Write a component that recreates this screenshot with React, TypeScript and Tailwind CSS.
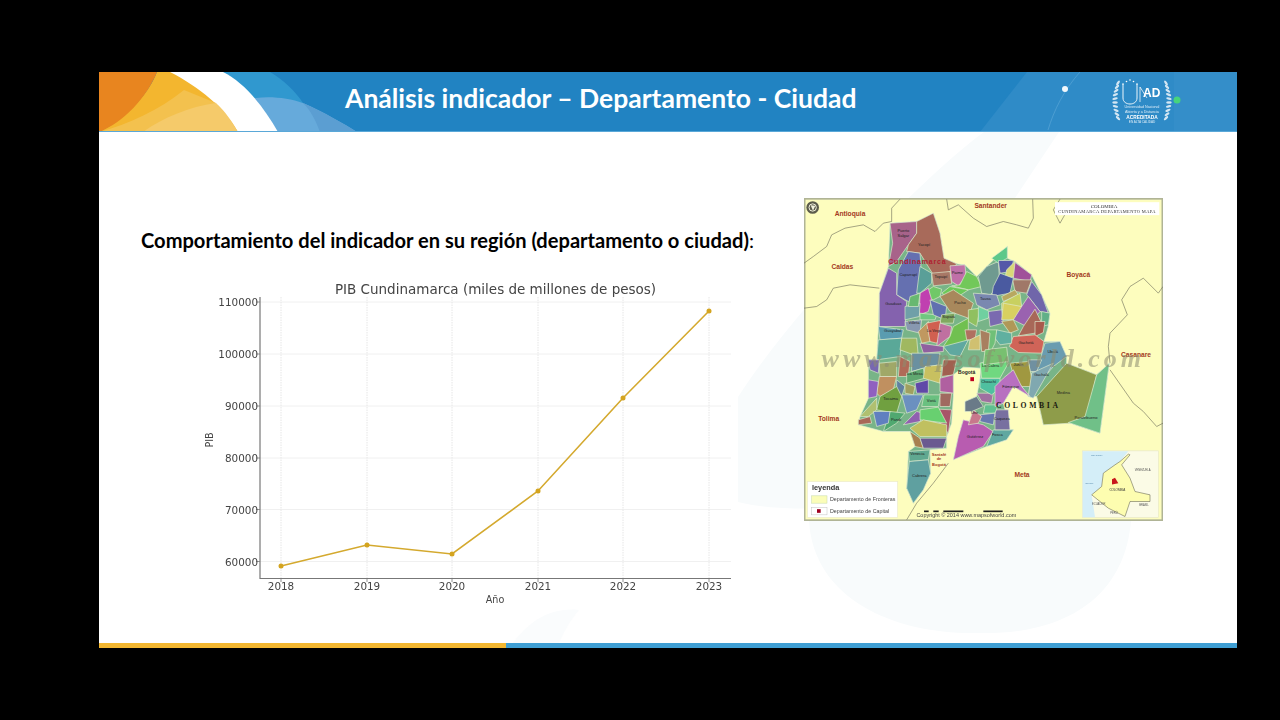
import React from "react";

const SILHOUETTE =
  "510,280 590,275 640,250 660,310 672,385 710,402 735,405 770,440 800,410 862,350 862,385 885,395 935,435 965,495 990,550 985,590 972,635 1020,635 1040,680 1040,700 1130,735 1168,700 1140,910 1045,878 970,885 950,800 925,800 905,770 880,770 850,820 870,900 880,900 860,930 800,950 700,990 715,920 730,870 745,885 760,840 735,845 735,815 770,800 780,745 782,715 730,712 700,735 700,800 695,880 680,920 680,955 630,960 632,1030 610,1080 580,1120 560,1075 565,965 585,950 570,905 490,905 415,885 420,860 445,805 445,690 470,690 475,590 478,490 505,410";

const REGIONS: [string, string][] = [
  ["#a8638a", "510,280 590,275 590,310 565,345 530,395 505,410 518,340"],
  ["#a86a5a", "590,275 640,250 660,310 672,385 710,402 695,425 640,435 600,370 560,365 565,345 590,310"],
  ["#6570b0", "565,365 600,370 605,440 595,490 565,515 530,495 535,420"],
  ["#8462ae", "505,415 530,430 530,495 560,515 555,590 478,590 478,490"],
  ["#5a9f98", "600,410 635,430 635,460 600,490 590,490"],
  ["#a87866", "635,430 690,425 695,462 640,468"],
  ["#c070a8", "690,408 735,405 738,440 715,468 695,455"],
  ["#72c85a", "740,425 770,440 785,470 745,480 695,468 720,465"],
  ["#6cc858", "690,470 745,480 700,510 665,490"],
  ["#70c868", "610,490 640,470 665,478 660,500 640,510 625,505"],
  ["#6f9a90", "800,410 835,395 840,470 810,495 785,490 775,440"],
  ["#5cc88a", "815,385 862,350 862,385 835,400"],
  ["#5558a8", "835,392 880,392 875,425 840,430"],
  ["#d8d878", "860,420 885,395 885,440 855,445"],
  ["#a0509a", "885,398 935,435 930,455 880,445"],
  ["#a07868", "878,450 935,450 920,490 885,485"],
  ["#4a5aa0", "840,430 880,445 870,490 815,500 820,470"],
  ["#7066aa", "935,455 965,495 985,550 960,545 925,500 920,495"],
  ["#b8a860", "845,500 885,480 895,495 850,515"],
  ["#c8d060", "845,520 900,490 905,530 845,540"],
  ["#9a62b0", "880,530 905,530 925,500 960,545 920,590 880,570"],
  ["#60b088", "965,545 990,550 985,585 965,590"],
  ["#a86858", "945,538 965,580 945,610 895,618 910,590"],
  ["#a85a4c", "945,575 975,575 970,608 945,620"],
  ["#d06458", "880,620 945,615 972,635 965,670 895,668 868,650"],
  ["#6a9cb0", "975,640 1020,635 1040,680 1000,710 950,770 925,800 935,730 960,690"],
  ["#7090a0", "925,690 965,690 950,725 930,725"],
  ["#a09840", "870,700 925,695 940,770 905,770 880,735"],
  ["#80a8b0", "935,730 1000,700 940,805 925,800"],
  ["#8e9c4a", "950,800 1040,700 1130,735 1100,860 1050,880 970,885 960,840"],
  ["#70c088", "1168,700 1140,910 1045,878 1095,860 1130,735"],
  ["#a8885c", "660,500 700,480 760,520 745,565 690,545"],
  ["#7a88b0", "760,490 830,495 840,525 800,540 770,525"],
  ["#90c060", "745,540 780,535 770,590 745,575"],
  ["#70d0a0", "775,530 810,545 805,565 775,575"],
  ["#7a6ab0", "805,545 845,540 850,580 810,590"],
  ["#d8d060", "850,520 905,530 880,570 845,570"],
  ["#b09858", "845,575 880,570 895,600 870,610"],
  ["#60b0a0", "830,600 875,610 875,640 840,645 825,625"],
  ["#70c078", "800,600 830,600 825,640 815,660 790,655"],
  ["#c040b0", "600,490 625,475 635,510 625,545 598,555"],
  ["#70a0a8", "555,530 600,520 598,560 555,570"],
  ["#68b870", "570,500 600,490 595,530 565,530"],
  ["#70c880", "600,550 650,555 645,570 600,570"],
  ["#6070b0", "630,510 680,530 675,570 640,555"],
  ["#8898b0", "555,575 605,570 600,610 560,600"],
  ["#80a860", "665,555 705,550 700,580 660,580"],
  ["#c09860", "595,605 625,575 630,635 605,640"],
  ["#d06050", "620,580 660,572 668,610 650,640 630,635"],
  ["#c070a0", "660,580 695,590 690,620 650,650"],
  ["#70c050", "700,590 745,565 745,630 690,670 670,650 690,620"],
  ["#5a9cb0", "475,590 550,600 545,625 480,630"],
  ["#5aa898", "475,630 545,625 540,680 470,690"],
  ["#a0b860", "545,625 590,625 595,680 540,660"],
  ["#9060a0", "600,640 670,650 670,665 610,670"],
  ["#60a8a0", "670,650 745,630 720,680 690,675"],
  ["#b07060", "735,600 770,600 765,630 740,630"],
  ["#d0c070", "750,630 780,615 780,660 745,660"],
  ["#a88060", "780,600 810,610 805,665 785,665"],
  ["#7868b0", "445,690 478,690 475,730 450,720"],
  ["#a0a868", "478,700 530,695 530,740 480,740"],
  ["#b06a58", "540,680 570,695 565,740 535,740"],
  ["#6a90a0", "575,670 660,670 655,705 610,715 575,725"],
  ["#60a870", "560,730 610,715 615,745 560,760"],
  ["#c8c060", "615,710 665,705 660,760 610,745"],
  ["#a06050", "670,690 710,690 700,735 665,740"],
  ["#b060a0", "660,745 700,735 700,790 660,785"],
  ["#a06a60", "660,790 695,790 690,830 660,830"],
  ["#a85468", "655,838 695,840 685,910 660,880"],
  ["#6080a0", "530,750 555,770 545,800 530,795"],
  ["#a0a060", "555,760 585,770 580,795 555,790"],
  ["#6048a8", "585,760 625,750 625,790 590,790"],
  ["#c09060", "478,740 530,740 520,780 480,800 470,790"],
  ["#9060c0", "445,750 475,755 470,800 445,805"],
  ["#70a040", "480,800 530,770 545,800 530,850 470,840"],
  ["#6b90c0", "545,795 610,795 590,840 560,850"],
  ["#6ac080", "612,795 660,795 655,830 605,830"],
  ["#50a870", "510,845 555,850 530,880 490,905"],
  ["#b0c070", "420,860 470,805 470,840 445,860"],
  ["#a86858", "415,870 450,860 455,880 415,885"],
  ["#6080c0", "460,845 510,845 505,880 470,890"],
  ["#9060b0", "550,885 590,845 610,850 600,875"],
  ["#68d070", "600,840 655,832 680,880 600,870"],
  ["#c0c060", "570,895 610,870 680,885 680,920 600,920"],
  ["#a88050", "570,905 600,925 610,955 585,950"],
  ["#6a5a90", "600,925 680,925 670,955 610,955"],
  ["#60a890", "565,965 630,960 625,990 568,995"],
  ["#5fa0a0", "568,995 625,990 632,1030 610,1080 580,1120 560,1075 565,1020"],
  ["#b85cb0", "730,870 790,885 820,905 790,950 700,990 715,920"],
  ["#60a8a0", "820,900 880,900 860,930 800,950"],
  ["#7870a0", "825,840 865,840 870,900 825,900"],
  ["#60c090", "795,825 835,825 825,850 790,850"],
  ["#6878b0", "780,855 825,850 820,885 780,875"],
  ["#c8788c", "745,885 760,840 785,860 775,880"],
  ["#a070a0", "770,790 820,790 815,820 785,815"],
  ["#50c0a0", "780,745 840,745 840,775 815,795 780,775"],
  ["#6a7a88", "735,815 770,800 790,830 755,845 735,845"],
  ["#70d880", "780,700 850,680 865,700 840,745 785,745"],
  ["#78c070", "795,660 860,652 865,695 790,705"],
  ["#b870c0", "880,720 905,770 930,800 880,770 850,820 825,830 825,770 850,745"],
];

const LINES = [
  "252,400 280,380 320,350 335,315 375,295 430,285 465,305 490,280 515,275 515,235 540,208",
  "252,535 290,530 320,510 340,475 390,465 478,475",
  "680,208 685,240 715,225 760,265 800,290 850,275 890,285 925,295 940,265 938,208",
  "1020,208 1000,240 1020,280 1040,245",
  "1329,470 1315,490 1270,445 1230,470 1205,510 1222,555 1170,610 1165,650 1170,700",
  "1170,720 1240,820 1270,845 1310,890 1329,880",
  "685,1000 640,1060 590,1120 560,1170",
];

const SMALL: [string, number, number][] = [
  ["Puerto", 550, 307], ["Salgar", 550, 323], ["Yacopí", 612, 349], ["Caparrapí", 565, 438],
  ["Guaduas", 520, 527], ["Pacho", 720, 523], ["Paime", 712, 433], ["Topaipí", 663, 445],
  ["Medina", 1030, 792], ["Paratebueno", 1098, 867], ["Gutiérrez", 765, 926], ["Gachetá", 918, 642],
  ["Ubalá", 998, 671], ["Gachalá", 964, 739], ["Junín", 895, 710], ["La Calera", 812, 712],
  ["Choachí", 806, 760], ["Fómeque", 872, 774], ["Cabrera", 598, 1043], ["Venecia", 592, 975],
  ["Caqueza", 845, 870], ["Fosca", 832, 920], ["Une", 764, 854], ["Tausa", 796, 512],
  ["Guayabal", 518, 606], ["Villeta", 582, 583], ["La Vega", 642, 608], ["Supatá", 686, 565],
  ["Tocaima", 512, 810], ["La Mesa", 585, 735], ["Viotá", 634, 816], ["Pandi", 528, 873],
];

const CHART_X = [281, 367, 452, 538, 623, 709];
const CHART_Y = [566, 545, 554, 491, 398, 311];
const YEARS = ["2018", "2019", "2020", "2021", "2022", "2023"];
const TICKS: [string, number][] = [
  ["110000", 302], ["100000", 354], ["90000", 406], ["80000", 458], ["70000", 509.5], ["60000", 561.5],
];

function HeaderArt() {
  return (
    <svg className="absolute inset-0" width="1138" height="60" viewBox="0 0 1138 60">
      <rect width="1138" height="60" fill="#2183c2" />
      <path d="M928 0H1138V60H881Z" fill="#2f8bc7" />
      <rect x="1075" y="0" width="63" height="60" fill="#4094cd" opacity="0.35" />
      <path d="M110 0H171C185 8 197 20 204 31L157 26H120Z" fill="#3098cf" />
      <path d="M130 26H157C172 24 190 26 204 31C225 40 245 52 258 60H150Z" fill="#66aadb" />
      <path d="M204 31C225 40 245 52 258 60H221C217 49 212 39 204 31Z" fill="#5b9ed2" />
      <path d="M60 0H124C145 10 165 35 179 60H130Z" fill="#ffffff" />
      <path d="M0 60C30 45 50 20 58 0H71C100 15 125 35 139 60Z" fill="#f3b62f" />
      <path d="M0 60C30 52 60 38 85 18L117 31C100 40 70 50 44 60Z" fill="#f3c14e" />
      <path d="M44 60C65 45 90 35 117 31C127 40 133 50 139 60Z" fill="#f5ca6a" />
      <path d="M0 0H58C48 25 25 50 0 60Z" fill="#e8851f" />
      <path d="M981 0C965 18 955 38 949 58" fill="none" stroke="#5fa9d8" strokeWidth="0.6" />
      <circle cx="966" cy="17" r="3" fill="#f2f8fc" />
      <circle cx="1078" cy="28" r="3.5" fill="#46d47c" />
      <rect y="59" width="1138" height="1" fill="#5aa8d8" />
    </svg>
  );
}

function Logo() {
  const leaves = [0, 1, 2, 3, 4, 5, 6, 7, 8, 9];
  return (
    <svg className="absolute left-[1012px] top-[6px] blur-[0.3px]" width="62" height="47" viewBox="0 0 62 47" style={{ fontFamily: '"Liberation Sans", sans-serif' }}>
      {leaves.map((i) => {
        const bow = Math.sin((i / 9) * Math.PI) * 3;
        const y = 5 + i * 3.9;
        return (
          <g key={i} fill="#d3e6f3">
            <ellipse cx={7 - bow} cy={y} rx="2.8" ry="1.2" transform={`rotate(${-55 + i * 11} ${7 - bow} ${y})`} />
            <ellipse cx={55 + bow} cy={y} rx="2.8" ry="1.2" transform={`rotate(${55 - i * 11} ${55 + bow} ${y})`} />
          </g>
        );
      })}
      <path d="M12 6V20C12 28 26 28 26 20V6" fill="none" stroke="#eef6fb" strokeWidth="1" />
      <path d="M29 24V9L36 20" fill="none" stroke="#eef6fb" strokeWidth="0.8" />
      <text x="32" y="19" fontSize="12" fontWeight="700" fill="#ffffff">AD</text>
      {[0, 1, 2, 3, 4].map((i) => (
        <circle key={i} cx={12 + i * 3.5} cy={[6, 3.5, 2, 3.5, 6][i]} r="0.8" fill="#ffffff" />
      ))}
      <text x="31" y="30" fontSize="3.7" textAnchor="middle" fill="#dcecf7">Universidad Nacional</text>
      <text x="31" y="34.5" fontSize="3.7" textAnchor="middle" fill="#dcecf7">Abierta y a Distancia</text>
      <text x="31" y="41" fontSize="4.8" fontWeight="700" textAnchor="middle" fill="#ffffff">ACREDITADA</text>
      <text x="31" y="45" fontSize="3.1" textAnchor="middle" fill="#dcecf7">EN ALTA CALIDAD</text>
    </svg>
  );
}

function Chart() {
  return (
    <svg width="535" height="332" viewBox="200 278 535 332" className="ml-[59px] mt-[28px] blur-[0.3px]" style={{ fontFamily: '"DejaVu Sans", sans-serif' }}>
      {TICKS.map(([, y]) => (
        <line key={y} x1="260" x2="731" y1={y} y2={y} stroke="#f0f0f0" strokeWidth="1" />
      ))}
      {CHART_X.map((x) => (
        <line key={x} x1={x} x2={x} y1="297" y2="578" stroke="#e6e6e6" strokeWidth="1" strokeDasharray="1.5 1" />
      ))}
      <path d="M260 297V578.5H731" fill="none" stroke="#777777" strokeWidth="1.2" />
      {TICKS.map(([t, y]) => (
        <g key={t}>
          <line x1="256" x2="260" y1={y} y2={y} stroke="#777777" strokeWidth="0.8" />
          <text x="258" y={y + 4} fontSize="10.4" fill="#444444" textAnchor="end">{t}</text>
        </g>
      ))}
      {YEARS.map((yr, i) => (
        <g key={yr}>
          <line x1={CHART_X[i]} x2={CHART_X[i]} y1="578" y2="582" stroke="#777777" strokeWidth="0.8" />
          <text x={CHART_X[i]} y="590" fontSize="10.4" fill="#444444" textAnchor="middle">{yr}</text>
        </g>
      ))}
      <text x="495" y="603" fontSize="9.6" fill="#444444" textAnchor="middle">Año</text>
      <text x="0" y="0" fontSize="9.6" fill="#444444" textAnchor="middle" transform="translate(213 440) rotate(-90)">PIB</text>
      <text x="495.5" y="294" fontSize="13.5" fill="#444444" textAnchor="middle">PIB Cundinamarca (miles de millones de pesos)</text>
      <polyline points={CHART_X.map((x, i) => `${x},${CHART_Y[i]}`).join(" ")} fill="none" stroke="#d4a92e" strokeWidth="1.6" />
      {CHART_X.map((x, i) => (
        <circle key={x} cx={x} cy={CHART_Y[i]} r="2.5" fill="#d4a41f" />
      ))}
    </svg>
  );
}

function ColombiaMap() {
  return (
    <svg width="359" height="323" viewBox="252 205 1077 968" className="mt-[66px] shrink-0 blur-[0.5px]" style={{ fontFamily: '"Liberation Sans", sans-serif' }}>
      <rect x="254" y="207" width="1073" height="964" fill="#fdfdbe" stroke="#b0b496" strokeWidth="5" />
      {LINES.map((p) => (
        <polyline key={p} points={p} fill="none" stroke="#6a6a58" strokeWidth="1.8" />
      ))}
      <polygon points={SILHOUETTE} fill="#78b488" stroke="#e4efd8" strokeWidth="2" strokeLinejoin="round" />
      <g strokeLinejoin="round">
        {REGIONS.map(([c, p]) => (
          <polygon key={p} points={p} fill={c} stroke="#dfeccf" strokeWidth="2" />
        ))}
      </g>
      <g fontSize="12" fill="#222222" textAnchor="middle">
        {SMALL.map(([t, x, y]) => (
          <text key={t + x} x={x} y={y}>{t}</text>
        ))}
      </g>
      <g fontSize="20" fontWeight="700" fill="#a33a22" textAnchor="middle">
        <text x="390" y="260">Antioquia</text>
        <text x="812" y="236">Santander</text>
        <text x="367" y="419">Caldas</text>
        <text x="1075" y="441">Boyacá</text>
        <text x="1248" y="683">Casanare</text>
        <text x="326" y="875">Tolima</text>
        <text x="906" y="1042">Meta</text>
      </g>
      <text x="592" y="403" fontSize="21" fontWeight="700" letterSpacing="2.4" fill="#b02030" textAnchor="middle">Cundinamarca</text>
      <text x="740" y="733" fontSize="15" fontWeight="700" fill="#222222" textAnchor="middle">Bogotá</text>
      <rect x="751" y="742" width="11" height="12" fill="#c00020" />
      <text x="925" y="835" fontSize="23" fontWeight="700" letterSpacing="8" fill="#1a1a10" textAnchor="middle" style={{ fontFamily: '"Liberation Serif", serif' }}>COLOMBIA</text>
      <g fontSize="12" fontWeight="700" fill="#a33a22" textAnchor="middle">
        <text x="657" y="978">Santafé</text>
        <text x="657" y="992">de</text>
        <text x="657" y="1008">Bogotá</text>
      </g>
      <text x="790" y="712" fontSize="78" fontWeight="700" fontStyle="italic" letterSpacing="12" fill="#8d8d70" opacity="0.55" textAnchor="middle" className="blur-[1.2px]" style={{ fontFamily: '"Liberation Serif", serif' }}>www.mapsofworld.com</text>
      <circle cx="278" cy="233" r="19" fill="#5c5c4c" />
      <circle cx="278" cy="233" r="11" fill="none" stroke="#f2f2dc" strokeWidth="3" />
      <path d="M272 226L286 228L279 243Z" fill="#f2f2dc" />
      <rect x="1005" y="217" width="313" height="39" fill="#ffffff" />
      <g fill="#333333" textAnchor="middle" style={{ fontFamily: '"Liberation Serif", serif' }}>
        <text x="1152" y="235" fontSize="15">COLOMBIA</text>
        <text x="1161" y="250" fontSize="13.5" letterSpacing="1">CUNDINAMARCA DEPARTAMENTO MAPA</text>
      </g>
      <rect x="262" y="1055" width="271" height="108" fill="#ffffff" stroke="#ecebc8" strokeWidth="2" />
      <text x="276" y="1081" fontSize="22" fontWeight="700" fill="#333333">leyenda</text>
      <rect x="275" y="1098" width="46" height="22" fill="#fbfdb9" stroke="#c4d8a4" strokeWidth="1.5" />
      <text x="330" y="1115" fontSize="16" fill="#444444">Departamento de Fronteras</text>
      <rect x="275" y="1133" width="46" height="22" fill="#ffffff" stroke="#c0c0c0" strokeWidth="1.5" />
      <rect x="291" y="1138" width="11" height="11" fill="#a00020" />
      <text x="330" y="1149" fontSize="16" fill="#444444">Departamento de Capital</text>
      <rect x="612" y="1142" width="14" height="5" fill="#222222" />
      <rect x="640" y="1142" width="16" height="5" fill="#222222" />
      <rect x="670" y="1142" width="60" height="5" fill="#222222" />
      <rect x="790" y="1142" width="58" height="5" fill="#222222" />
      <text x="739" y="1163" fontSize="16.4" fill="#444444" textAnchor="middle">Copyright © 2014 www.mapsofworld.com</text>
      <rect x="1087" y="963" width="228" height="200" fill="#fbfbe6" stroke="#e8e8c8" strokeWidth="2" />
      <path d="M1088 964H1225L1200 995L1150 1030L1145 1070L1115 1095L1125 1162H1088Z" fill="#d4eef8" />
      <polygon points="1225,973 1200,995 1185,1005 1150,1030 1145,1070 1115,1095 1165,1135 1215,1160 1230,1115 1290,1115 1290,1095 1245,1085 1230,1045 1205,1005 1230,975" fill="#fdfdb0" stroke="#5a5a4a" strokeWidth="1.6" />
      <path d="M1176 1048L1185 1044L1195 1060L1176 1064Z" fill="#c8181c" />
      <text x="1192" y="1084" fontSize="9" fill="#333333" textAnchor="middle">COLOMBIA</text>
      <text x="1268" y="1025" fontSize="8" fill="#555555" textAnchor="middle">VENEZUELA</text>
      <text x="1272" y="1130" fontSize="8" fill="#555555" textAnchor="middle">BRASIL</text>
      <text x="1136" y="1127" fontSize="8" fill="#555555" textAnchor="middle">ECUADOR</text>
      <text x="1182" y="1152" fontSize="8" fill="#555555" textAnchor="middle">PERÚ</text>
      <text x="1130" y="980" fontSize="7" fill="#5588aa" textAnchor="middle">Mar Caribe</text>
      <text x="1108" y="1062" fontSize="7" fill="#5588aa" textAnchor="middle">Océano</text>
    </svg>
  );
}

export default function App() {
  return (
    <div className="h-[720px] w-[1280px] overflow-hidden bg-black pl-[99px] pt-[72px]">
      <div className="relative flex h-[576px] w-[1138px] flex-col overflow-hidden bg-white">
        <svg className="absolute inset-0" width="1138" height="576" viewBox="0 0 1138 576">
          <path d="M885 60C830 100 700 230 639 325V430C670 437 690 437 760 437L800 300L960 60Z" fill="#f8fbfc" />
          <path d="M710 449C715 530 800 563 880 561C960 563 1025 530 1032 449Z" fill="#f8fbfc" />
          <path d="M414 571C430 550 450 535 480 538C470 550 465 560 460 571Z" fill="#fafcfd" />
        </svg>
        <header className="relative h-[60px] shrink-0 pl-[246px]">
          <HeaderArt />
          <Logo />
          <h1 className="relative m-0 font-['Lato',sans-serif] text-[26.5px] font-bold leading-[52px] text-white">
            Análisis indicador – Departamento - Ciudad
          </h1>
        </header>
        <main className="relative flex flex-1 justify-between pl-[42px] pr-[74px]">
          <section className="pt-[98px]">
            <p className="m-0 whitespace-nowrap font-['Lato',sans-serif] text-[20.1px] font-bold leading-[20px] text-black">
              Comportamiento del indicador en su región (departamento o ciudad)<span className="font-normal">:</span>
            </p>
            <Chart />
          </section>
          <ColombiaMap />
        </main>
        <div className="relative flex h-[5px] shrink-0">
          <div className="h-full w-[407px] bg-[#f3b731]" />
          <div className="h-full flex-1 bg-[#3f9fd4]" />
        </div>
      </div>
    </div>
  );
}
